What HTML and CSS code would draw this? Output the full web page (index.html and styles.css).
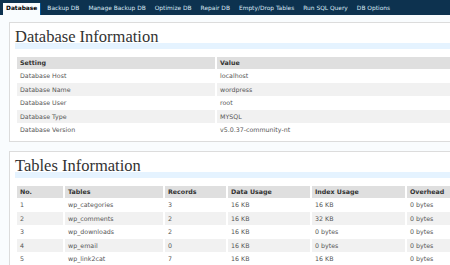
FILE: index.html
```html
<!DOCTYPE html>
<html>
<head>
<meta charset="utf-8">
<title>Database</title>
<link rel="stylesheet" href="styles.css">
</head>
<body>
<nav class="submenu">
  <a class="tab current">Database</a>
  <a class="tab">Backup DB</a>
  <a class="tab">Manage Backup DB</a>
  <a class="tab">Optimize DB</a>
  <a class="tab">Repair DB</a>
  <a class="tab">Empty/Drop Tables</a>
  <a class="tab">Run SQL Query</a>
  <a class="tab">DB Options</a>
</nav>

<div class="wrap">
  <h2 class="title">Database Information</h2>
  <table class="widefat info">
    <colgroup><col class="c-setting"><col class="c-value"></colgroup>
    <thead>
      <tr><th>Setting</th><th>Value</th></tr>
    </thead>
    <tbody>
      <tr><td>Database Host</td><td>localhost</td></tr>
      <tr class="alt"><td>Database Name</td><td>wordpress</td></tr>
      <tr><td>Database User</td><td>root</td></tr>
      <tr class="alt"><td>Database Type</td><td>MYSQL</td></tr>
      <tr><td>Database Version</td><td>v5.0.37-community-nt</td></tr>
    </tbody>
  </table>
</div>

<div class="wrap">
  <h2 class="title">Tables Information</h2>
  <table class="widefat tables">
    <colgroup><col class="c-no"><col class="c-name"><col class="c-rec"><col class="c-data"><col class="c-index"><col class="c-over"></colgroup>
    <thead>
      <tr><th>No.</th><th>Tables</th><th>Records</th><th>Data Usage</th><th>Index Usage</th><th>Overhead</th></tr>
    </thead>
    <tbody>
      <tr><td>1</td><td>wp_categories</td><td>3</td><td>16 KB</td><td>16 KB</td><td>0 bytes</td></tr>
      <tr class="alt"><td>2</td><td>wp_comments</td><td>2</td><td>16 KB</td><td>32 KB</td><td>0 bytes</td></tr>
      <tr><td>3</td><td>wp_downloads</td><td>2</td><td>16 KB</td><td>0 bytes</td><td>0 bytes</td></tr>
      <tr class="alt"><td>4</td><td>wp_email</td><td>0</td><td>16 KB</td><td>0 bytes</td><td>0 bytes</td></tr>
      <tr><td>5</td><td>wp_link2cat</td><td>7</td><td>16 KB</td><td>16 KB</td><td>0 bytes</td></tr>
    </tbody>
  </table>
</div>
</body>
</html>
```

FILE: styles.css
```css
html, body {
  margin: 0;
  padding: 0;
  overflow: hidden;
  background: #f9fcfe;
}

body {
  font-family: "DejaVu Sans", Verdana, sans-serif;
  color: #555;
  width: 450px;
}

.submenu {
  display: flex;
  align-items: flex-end;
  height: 15px;
  padding-left: 3px;
  background: #0d324f;
  gap: 3px;
}

.tab {
  display: block;
  height: 12px;
  line-height: 11px;
  padding: 0 3px;
  font-size: 5.9px;
  color: #dbe9f5;
  white-space: nowrap;
}

.tab.current {
  background: #f9fcfe;
  color: #000;
  font-weight: bold;
  border-right: 1px solid #045290;
  padding-right: 3px;
  margin-right: 0;
}

.wrap {
  width: 480px;
  margin: 7px 0 0 9px;
  padding: 8px 5px 4px;
  background: #fff;
  border: 1px solid #dcdcdc;
}

.wrap + .wrap {
  margin-top: 9px;
}

.title {
  margin: 0 0 7px;
  font: normal 16.5px/12px "Liberation Serif", "Times New Roman", serif;
  color: #333;
  border-bottom: 6px solid #e5f3ff;
}

.widefat {
  width: 100%;
  border-collapse: separate;
  border-spacing: 2px 1px;
  font-size: 6.3px;
  table-layout: fixed;
}

.widefat th,
.widefat td {
  text-align: left;
  padding: 0 2px 0 3px;
  height: 12px;
  line-height: 12px;
  white-space: nowrap;
  overflow: hidden;
}

.widefat th {
  background: #dfdfdf;
  color: #333;
  font-weight: bold;
}

.widefat tr.alt td {
  background: #f1f1f1;
  height: 13px;
  line-height: 13px;
}

.c-setting { width: 198px; }
.c-no { width: 46px; }
.c-name { width: 98px; }
.c-rec { width: 61px; }
.c-data { width: 82px; }
.c-index { width: 93px; }
```
